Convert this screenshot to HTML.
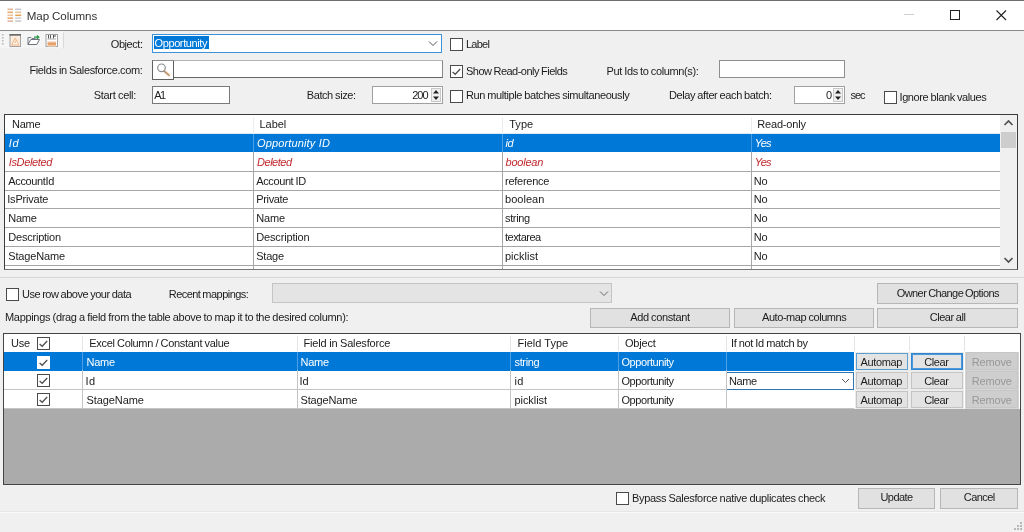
<!DOCTYPE html>
<html>
<head>
<meta charset="utf-8">
<title>Map Columns</title>
<style>
html,body{margin:0;padding:0;}
body{width:1024px;height:532px;overflow:hidden;background:#f0f0f0;font-family:"Liberation Sans",sans-serif;font-size:11px;color:#1c1c1c;position:relative;}
.abs{position:absolute;}
.t{position:absolute;white-space:nowrap;line-height:16px;height:16px;}
.inp{position:absolute;background:#fff;border:1px solid #7a7a7a;box-sizing:border-box;}
.cb{position:absolute;width:13px;height:13px;box-sizing:border-box;border:1px solid #4a4a4a;background:#fff;}
.cb svg{position:absolute;left:0;top:0;}
.btn{position:absolute;box-sizing:border-box;border:1px solid #b6b6b6;background:#e1e1e1;}
.hl{position:absolute;height:1px;background:#a6a6a6;}
.vl{position:absolute;width:1px;background:#a6a6a6;}
#titlebar{left:0;top:0;width:1024px;height:31px;background:#fff;border-top:1px solid #6e6e6e;border-bottom:1px solid #8a8a8a;box-sizing:border-box;}
</style>
</head>
<body>
<div id="titlebar" class="abs"></div>
<svg class="abs" style="left:7px;top:8px" width="15" height="14" viewBox="0 0 15 14">
 <g><rect x="0.500" y="0.500" width="5.500" height="1.600" fill="#e3b89a"/><rect x="0.500" y="3.500" width="5.500" height="1.600" fill="#e9a96c"/><rect x="0.500" y="6.500" width="5.500" height="1.600" fill="#ebc3a2"/><rect x="0.500" y="9.400" width="5.500" height="1.600" fill="#e9a96c"/><rect x="0.500" y="12.300" width="5.500" height="1.600" fill="#dcb5a4"/></g>
 <g><rect x="8.200" y="0.500" width="6" height="1.600" fill="#c9c9d2"/><rect x="8.200" y="3.500" width="6" height="1.600" fill="#e4c3a4"/><rect x="8.200" y="6.500" width="6" height="1.600" fill="#e9a355"/><rect x="8.200" y="9.400" width="6" height="1.600" fill="#d2d2da"/><rect x="8.200" y="12.300" width="6" height="1.600" fill="#c9c9c9"/></g>
</svg>
<svg class="abs" style="left:900px;top:5px" width="120" height="22" viewBox="0 0 120 22">
 <line x1="4" y1="9.500" x2="14" y2="9.500" stroke="#d0d0d0" stroke-width="1"/>
 <rect x="50.500" y="5.500" width="9" height="9" fill="none" stroke="#222" stroke-width="1"/>
 <path d="M96.500 5.500 L106 15 M106 5.500 L96.500 15" stroke="#222" stroke-width="1.100" fill="none"/>
</svg>
<div class="abs" style="left:0;top:31px;width:64px;height:17px;background:#f5f5f5;"></div>
<svg class="abs" style="left:0px;top:31px" width="66" height="19" viewBox="0 0 66 19">
 <g fill="#b4b4b4"><rect x="2" y="3" width="1.500" height="1.500"/><rect x="2" y="6" width="1.500" height="1.500"/><rect x="2" y="9" width="1.500" height="1.500"/><rect x="2" y="12" width="1.500" height="1.500"/></g>
 <g transform="translate(9.500,3)">
  <rect x="0.500" y="0.500" width="10.500" height="12" fill="#fcecde" stroke="#a2a2a2"/>
  <rect x="0" y="0" width="11.500" height="1.700" fill="#6a6a6a"/>
  <path d="M5.750 4 L9.300 11 L2.200 11 Z" fill="#fff8f0" stroke="#efb684" stroke-width="1"/>
  <path d="M5.750 6.500 V9.300" stroke="#efb684" stroke-width="1"/>
 </g>
 <g transform="translate(27,4)">
  <path d="M1 9.500 V2.500 H4 L5 3.500 H8.500" fill="none" stroke="#6a707a" stroke-width="0.900"/>
  <path d="M1 9.500 L3.800 4.500 H12.500 L9.800 9.500 Z" fill="#fff" stroke="#5c626c" stroke-width="0.900"/>
  <path d="M7 2.200 H11.500 M9.800 0.600 L11.800 2.200 L9.800 3.800" fill="none" stroke="#2a9a48" stroke-width="1.300"/>
 </g>
 <g transform="translate(45.500,3)">
  <defs><linearGradient id="fl" x1="0" y1="0" x2="0" y2="1"><stop offset="0" stop-color="#fff"/><stop offset="0.550" stop-color="#e39258"/><stop offset="1" stop-color="#fde0c4"/></linearGradient></defs>
  <rect x="0.500" y="0.500" width="11.500" height="12" fill="#fdfdfd" stroke="#a2a2a2"/>
  <path d="M3 1 V4.500 M5 1 V4.500 M8 1 V4.500 M9.500 1 V3" stroke="#444" stroke-width="0.900"/>
  <path d="M2 5 H10.500" stroke="#999" stroke-width="0.800"/>
  <rect x="2" y="6.500" width="8.500" height="6" fill="url(#fl)"/>
 </g>
 <rect x="63" y="1.500" width="1" height="16" fill="#d9d9d9"/>
</svg>
<div class="inp" style="left:152px;top:34px;width:290px;height:19px;border-color:#3d93da;"></div>
<div class="abs" style="left:154px;top:36px;width:55px;height:13px;background:#0078d7;"></div>
<svg class="abs" style="left:428px;top:40px" width="10" height="7" viewBox="0 0 10 7"><path d="M1 1.500 L5 5.500 L9 1.500" fill="none" stroke="#555" stroke-width="1"/></svg>
<div class="cb" style="left:450px;top:38px;"></div>
<div class="abs" style="left:152px;top:60px;width:22px;height:20px;box-sizing:border-box;border:1px solid #606060;border-top-color:#8c8c8c;background:#fff;"></div>
<svg class="abs" style="left:155px;top:62px" width="16" height="16" viewBox="0 0 16 16"><path d="M9.300 9.200 L14 13.200" stroke="#f8dcc0" stroke-width="3" stroke-linecap="round"/><path d="M9.300 9.200 L14 13.200" stroke="#b08a6a" stroke-width="1.300" stroke-linecap="round"/><circle cx="6.500" cy="5.800" r="3.800" fill="#fff" stroke="#8c8c8c" stroke-width="1.200"/></svg>
<div class="inp" style="left:173px;top:60px;width:270px;height:18px;border-color:#b4b4b4 #888 #666 #606060;"></div>
<div class="cb" style="left:450px;top:65px;"><svg width="11" height="11" viewBox="0 0 11 11"><path d="M1.600 6 L4.200 8.300 L9.200 3" fill="none" stroke="#505050" stroke-width="1.300"/></svg></div>
<div class="inp" style="left:719px;top:60px;width:126px;height:18px;border-color:#8e8e8e;"></div>
<div class="inp" style="left:152px;top:86px;width:78px;height:18px;"></div>
<div class="inp" style="left:372px;top:86px;width:71px;height:18px;border-color:#a0a0a0;"></div>
<div class="abs" style="left:431px;top:88px;width:10px;height:14px;background:#f0f0f0;border:1px solid #c8c8c8;box-sizing:border-box;"></div><svg class="abs" style="left:432px;top:88px" width="8" height="14" viewBox="0 0 8 14"><path d="M1 5.500 L4 2 L7 5.500 Z M1 8.500 L4 12 L7 8.500 Z" fill="#222"/></svg>
<div class="cb" style="left:450px;top:90px;"></div>
<div class="inp" style="left:794px;top:86px;width:51px;height:18px;border-color:#a0a0a0;"></div>
<div class="abs" style="left:833px;top:88px;width:10px;height:14px;background:#f0f0f0;border:1px solid #c8c8c8;box-sizing:border-box;"></div><svg class="abs" style="left:834px;top:88px" width="8" height="14" viewBox="0 0 8 14"><path d="M1 5.500 L4 2 L7 5.500 Z M1 8.500 L4 12 L7 8.500 Z" fill="#222"/></svg>
<div class="cb" style="left:884px;top:91px;"></div>
<div class="abs" style="left:4px;top:114px;width:1014px;height:156px;background:#fff;border:1px solid #3c3c3c;border-bottom-color:#777;box-sizing:border-box;overflow:hidden;">
<div class="abs" style="left:0;top:19px;width:995px;height:18px;background:#0078d7;"></div>
<div class="hl" style="left:0;width:995px;top:56px;"></div>
<div class="hl" style="left:0;width:995px;top:75px;"></div>
<div class="hl" style="left:0;width:995px;top:93px;"></div>
<div class="hl" style="left:0;width:995px;top:112px;"></div>
<div class="hl" style="left:0;width:995px;top:131px;"></div>
<div class="hl" style="left:0;width:995px;top:150px;"></div>
<div class="hl" style="left:0;width:995px;top:168px;"></div>
<div class="hl" style="left:0;width:995px;top:18px;background:#dbeaf7;"></div>
<div class="vl" style="left:248px;top:37px;height:160px;"></div>
<div class="vl" style="left:248px;top:19px;height:18px;background:#4a9fe6;"></div>
<div class="vl" style="left:248px;top:2px;height:15px;background:#ececec;"></div>
<div class="vl" style="left:497px;top:37px;height:160px;"></div>
<div class="vl" style="left:497px;top:19px;height:18px;background:#4a9fe6;"></div>
<div class="vl" style="left:497px;top:2px;height:15px;background:#ececec;"></div>
<div class="vl" style="left:746px;top:37px;height:160px;"></div>
<div class="vl" style="left:746px;top:19px;height:18px;background:#4a9fe6;"></div>
<div class="vl" style="left:746px;top:2px;height:15px;background:#ececec;"></div>
<div class="abs" style="left:995px;top:0;width:17px;height:160px;background:#f0f0f0;"></div>
<div class="abs" style="left:996px;top:17px;width:15px;height:16px;background:#cdcdcd;"></div>
<svg class="abs" style="left:998px;top:4px" width="11" height="8" viewBox="0 0 11 8"><path d="M1.500 6 L5.500 2 L9.500 6" fill="none" stroke="#505050" stroke-width="1.700"/></svg>
<svg class="abs" style="left:998px;top:141px" width="11" height="8" viewBox="0 0 11 8"><path d="M1.500 2 L5.500 6 L9.500 2" fill="none" stroke="#505050" stroke-width="1.700"/></svg>
</div>
<div class="abs" style="left:0;top:277px;width:1024px;height:1px;background:#d8d8d8;"></div>
<div class="cb" style="left:6px;top:288px;"></div>
<div class="abs" style="left:272px;top:283px;width:340px;height:20px;box-sizing:border-box;border:1px solid #c4c4c4;background:#e4e4e4;"></div>
<svg class="abs" style="left:599px;top:290px" width="10" height="7" viewBox="0 0 10 7"><path d="M1 1.500 L5 5.500 L9 1.500" fill="none" stroke="#666" stroke-width="1"/></svg>
<div class="btn" style="left:877px;top:283px;width:141px;height:21px;"></div>
<div class="btn" style="left:590px;top:308px;width:140px;height:20px;"></div>
<div class="btn" style="left:734px;top:308px;width:140px;height:20px;"></div>
<div class="btn" style="left:877px;top:308px;width:141px;height:20px;"></div>
<div class="abs" style="left:3px;top:333px;width:1018px;height:152px;background:#ababab;border:1px solid #444;box-sizing:border-box;overflow:hidden;">
<div class="abs" style="left:0;top:0;width:1016px;height:18px;background:#fff;"></div>
<div class="cb" style="left:33px;top:3px;"><svg width="11" height="11" viewBox="0 0 11 11"><path d="M1.600 6 L4.200 8.300 L9.200 3" fill="none" stroke="#505050" stroke-width="1.300"/></svg></div>
<div class="abs" style="left:0;top:18px;width:1016px;height:19px;background:#fff;"></div>
<div class="abs" style="left:0;top:18px;width:850px;height:19px;background:#0078d7;"></div>
<div class="cb" style="left:33px;top:22px;border-color:#fff;"><svg width="11" height="11" viewBox="0 0 11 11"><path d="M1.600 6 L4.200 8.300 L9.200 3" fill="none" stroke="#505050" stroke-width="1.300"/></svg></div>
<div class="abs" style="left:851px;top:18px;width:109px;height:19px;background:#ececec;"></div>
<div class="btn" style="left:852px;top:19px;width:52px;height:17px;border-color:#5a9fd4;background:#e3e3e3;"></div>
<div class="btn" style="left:907px;top:19px;width:52px;height:17px;border-color:#c4c4c4;background:#e3e3e3;border-color:#2f86d2;box-shadow:inset 0 0 0 1px #4b98da;"></div>
<div class="abs" style="left:961px;top:18px;width:54px;height:19px;background:#d6d6d6;"></div>
<div class="btn" style="left:962px;top:18px;width:52px;height:18px;background:#cecece;border-color:#c6c6c6;"></div>
<div class="abs" style="left:0;top:37px;width:1016px;height:19px;background:#fff;"></div>
<div class="hl" style="left:0;width:850px;top:55px;background:#c4c4c4;"></div>
<div class="cb" style="left:33px;top:40px;"><svg width="11" height="11" viewBox="0 0 11 11"><path d="M1.600 6 L4.200 8.300 L9.200 3" fill="none" stroke="#505050" stroke-width="1.300"/></svg></div>
<div class="abs" style="left:722px;top:38px;width:128px;height:18px;box-sizing:border-box;border:1px solid #2f74b5;background:#fff;"></div>
<svg class="abs" style="left:837px;top:44px" width="9" height="6" viewBox="0 0 9 6"><path d="M1 1 L4.500 4.500 L8 1" fill="none" stroke="#555" stroke-width="1"/></svg>
<div class="abs" style="left:851px;top:37px;width:109px;height:19px;background:#ececec;"></div>
<div class="btn" style="left:852px;top:38px;width:52px;height:17px;border-color:#c4c4c4;background:#e3e3e3;"></div>
<div class="btn" style="left:907px;top:38px;width:52px;height:17px;border-color:#c4c4c4;background:#e3e3e3;"></div>
<div class="abs" style="left:961px;top:37px;width:54px;height:19px;background:#d6d6d6;"></div>
<div class="btn" style="left:962px;top:37px;width:52px;height:18px;background:#cecece;border-color:#c6c6c6;"></div>
<div class="abs" style="left:0;top:56px;width:1016px;height:19px;background:#fff;"></div>
<div class="hl" style="left:0;width:850px;top:74px;background:#c4c4c4;"></div>
<div class="cb" style="left:33px;top:59px;"><svg width="11" height="11" viewBox="0 0 11 11"><path d="M1.600 6 L4.200 8.300 L9.200 3" fill="none" stroke="#505050" stroke-width="1.300"/></svg></div>
<div class="abs" style="left:851px;top:56px;width:109px;height:19px;background:#ececec;"></div>
<div class="btn" style="left:852px;top:57px;width:52px;height:17px;border-color:#c4c4c4;background:#e3e3e3;"></div>
<div class="btn" style="left:907px;top:57px;width:52px;height:17px;border-color:#c4c4c4;background:#e3e3e3;"></div>
<div class="abs" style="left:961px;top:56px;width:54px;height:19px;background:#d6d6d6;"></div>
<div class="btn" style="left:962px;top:56px;width:52px;height:18px;background:#cecece;border-color:#c6c6c6;"></div>
<div class="vl" style="left:78px;top:18px;height:56px;background:#c4c4c4;"></div>
<div class="vl" style="left:78px;top:18px;height:18px;background:#4a9fe6;"></div>
<div class="vl" style="left:78px;top:2px;height:15px;background:#e4e4e4;"></div>
<div class="vl" style="left:293px;top:18px;height:56px;background:#c4c4c4;"></div>
<div class="vl" style="left:293px;top:18px;height:18px;background:#4a9fe6;"></div>
<div class="vl" style="left:293px;top:2px;height:15px;background:#e4e4e4;"></div>
<div class="vl" style="left:506px;top:18px;height:56px;background:#c4c4c4;"></div>
<div class="vl" style="left:506px;top:18px;height:18px;background:#4a9fe6;"></div>
<div class="vl" style="left:506px;top:2px;height:15px;background:#e4e4e4;"></div>
<div class="vl" style="left:614px;top:18px;height:56px;background:#c4c4c4;"></div>
<div class="vl" style="left:614px;top:18px;height:18px;background:#4a9fe6;"></div>
<div class="vl" style="left:614px;top:2px;height:15px;background:#e4e4e4;"></div>
<div class="vl" style="left:722px;top:18px;height:56px;background:#c4c4c4;"></div>
<div class="vl" style="left:722px;top:18px;height:18px;background:#4a9fe6;"></div>
<div class="vl" style="left:722px;top:2px;height:15px;background:#e4e4e4;"></div>
<div class="vl" style="left:850px;top:2px;height:15px;background:#e4e4e4;"></div>
<div class="vl" style="left:905px;top:2px;height:15px;background:#e4e4e4;"></div>
<div class="vl" style="left:960px;top:2px;height:15px;background:#e4e4e4;"></div>
</div>
<div class="cb" style="left:616px;top:492px;"></div>
<div class="btn" style="left:858px;top:488px;width:77px;height:21px;"></div>
<div class="btn" style="left:940px;top:488px;width:78px;height:21px;"></div>
<div class="abs" style="left:0;top:511px;width:1024px;height:1px;background:#e6e6e6;"></div><div class="abs" style="left:0;top:512px;width:1024px;height:1px;background:#fafafa;"></div>
<svg class="abs" style="left:1012px;top:520px" width="12" height="12" viewBox="0 0 12 12"><g fill="#b8b8b8"><rect x="8" y="2" width="2" height="2"/><rect x="5" y="5" width="2" height="2"/><rect x="8" y="5" width="2" height="2"/><rect x="2" y="8" width="2" height="2"/><rect x="5" y="8" width="2" height="2"/><rect x="8" y="8" width="2" height="2"/></g></svg>
<div id="txt" style="position:absolute;left:0;top:0;width:1024px;height:532px;will-change:transform;">
<div class="t" style="left:26.70px;top:7.58px;letter-spacing:-0.084px;word-spacing:-0.084px;font-size:11.6px;color:#333;">Map Columns</div>
<div class="t" style="left:110.75px;top:35.69px;letter-spacing:-0.424px;">Object:</div>
<div class="t" style="left:154.50px;top:34.99px;letter-spacing:-0.386px;color:#fff;">Opportunity</div>
<div class="t" style="left:466.00px;top:35.69px;letter-spacing:-0.743px;">Label</div>
<div class="t" style="left:29.40px;top:62.39px;letter-spacing:-0.362px;word-spacing:-0.362px;">Fields in Salesforce.com:</div>
<div class="t" style="left:466.00px;top:62.59px;letter-spacing:-0.516px;word-spacing:-0.516px;">Show Read-only Fields</div>
<div class="t" style="left:606.50px;top:62.59px;letter-spacing:-0.372px;word-spacing:-0.372px;">Put Ids to column(s):</div>
<div class="t" style="left:93.75px;top:87.49px;letter-spacing:-0.299px;word-spacing:-0.299px;">Start cell:</div>
<div class="t" style="left:154.25px;top:87.49px;letter-spacing:-1.587px;">A1</div>
<div class="t" style="left:306.75px;top:87.49px;letter-spacing:-0.409px;word-spacing:-0.409px;">Batch size:</div>
<div class="t" style="left:412.25px;top:87.49px;letter-spacing:-0.993px;">200</div>
<div class="t" style="left:466.00px;top:87.49px;letter-spacing:-0.400px;word-spacing:-0.400px;">Run multiple batches simultaneously</div>
<div class="t" style="left:669.00px;top:87.49px;letter-spacing:-0.403px;word-spacing:-0.403px;">Delay after each batch:</div>
<div class="t" style="left:826.00px;top:87.49px;">0</div>
<div class="t" style="left:850.50px;top:87.49px;letter-spacing:-1.059px;">sec</div>
<div class="t" style="left:899.50px;top:88.59px;letter-spacing:-0.407px;word-spacing:-0.407px;">Ignore blank values</div>
<div class="t" style="left:12.00px;top:115.79px;letter-spacing:-0.242px;">Name</div>
<div class="t" style="left:259.50px;top:115.79px;letter-spacing:-0.055px;">Label</div>
<div class="t" style="left:509.25px;top:115.79px;letter-spacing:0.007px;">Type</div>
<div class="t" style="left:757.25px;top:115.79px;letter-spacing:-0.174px;">Read-only</div>
<div class="t" style="left:8.75px;top:135.24px;letter-spacing:0.694px;font-style:italic;color:#fff;">Id</div>
<div class="t" style="left:257.00px;top:135.24px;letter-spacing:0.145px;word-spacing:0.145px;font-style:italic;color:#fff;">Opportunity ID</div>
<div class="t" style="left:505.50px;top:135.24px;letter-spacing:-0.444px;font-style:italic;color:#fff;">id</div>
<div class="t" style="left:754.70px;top:135.24px;letter-spacing:-0.774px;font-style:italic;color:#fff;">Yes</div>
<div class="t" style="left:8.75px;top:153.99px;letter-spacing:-0.357px;font-style:italic;color:#c0282d;">IsDeleted</div>
<div class="t" style="left:257.00px;top:153.99px;letter-spacing:-0.466px;font-style:italic;color:#c0282d;">Deleted</div>
<div class="t" style="left:505.50px;top:153.99px;letter-spacing:-0.214px;font-style:italic;color:#c0282d;">boolean</div>
<div class="t" style="left:754.70px;top:153.99px;letter-spacing:-0.774px;font-style:italic;color:#c0282d;">Yes</div>
<div class="t" style="left:8.25px;top:172.74px;letter-spacing:-0.350px;">AccountId</div>
<div class="t" style="left:256.25px;top:172.74px;letter-spacing:-0.386px;word-spacing:-0.386px;">Account ID</div>
<div class="t" style="left:505.00px;top:172.74px;letter-spacing:-0.263px;">reference</div>
<div class="t" style="left:753.80px;top:172.74px;letter-spacing:-0.144px;">No</div>
<div class="t" style="left:7.25px;top:191.49px;letter-spacing:-0.209px;">IsPrivate</div>
<div class="t" style="left:256.25px;top:191.49px;letter-spacing:-0.353px;">Private</div>
<div class="t" style="left:505.00px;top:191.49px;letter-spacing:0.036px;">boolean</div>
<div class="t" style="left:753.80px;top:191.49px;letter-spacing:-0.144px;">No</div>
<div class="t" style="left:8.25px;top:210.24px;letter-spacing:-0.242px;">Name</div>
<div class="t" style="left:256.25px;top:210.24px;letter-spacing:-0.158px;">Name</div>
<div class="t" style="left:505.00px;top:210.24px;letter-spacing:-0.356px;">string</div>
<div class="t" style="left:753.80px;top:210.24px;letter-spacing:-0.144px;">No</div>
<div class="t" style="left:8.25px;top:228.99px;letter-spacing:-0.215px;">Description</div>
<div class="t" style="left:256.25px;top:228.99px;letter-spacing:-0.165px;">Description</div>
<div class="t" style="left:505.00px;top:228.99px;letter-spacing:-0.518px;">textarea</div>
<div class="t" style="left:753.80px;top:228.99px;letter-spacing:-0.144px;">No</div>
<div class="t" style="left:8.25px;top:247.74px;letter-spacing:-0.153px;">StageName</div>
<div class="t" style="left:256.25px;top:247.74px;letter-spacing:-0.245px;">Stage</div>
<div class="t" style="left:505.00px;top:247.74px;letter-spacing:-0.007px;">picklist</div>
<div class="t" style="left:753.80px;top:247.74px;letter-spacing:-0.144px;">No</div>
<div class="t" style="left:22.00px;top:285.69px;letter-spacing:-0.487px;word-spacing:-0.487px;">Use row above your data</div>
<div class="t" style="left:168.75px;top:285.69px;letter-spacing:-0.538px;word-spacing:-0.538px;">Recent mappings:</div>
<div class="t" style="left:896.75px;top:285.19px;letter-spacing:-0.581px;word-spacing:-0.581px;">Owner Change Options</div>
<div class="t" style="left:5.00px;top:309.44px;letter-spacing:-0.320px;word-spacing:-0.320px;">Mappings (drag a field from the table above to map it to the desired column):</div>
<div class="t" style="left:630.25px;top:308.94px;letter-spacing:-0.367px;word-spacing:-0.367px;">Add constant</div>
<div class="t" style="left:762.00px;top:308.94px;letter-spacing:-0.435px;word-spacing:-0.435px;">Auto-map columns</div>
<div class="t" style="left:929.75px;top:308.94px;letter-spacing:-0.462px;word-spacing:-0.462px;">Clear all</div>
<div class="t" style="left:11.00px;top:335.19px;letter-spacing:-0.222px;">Use</div>
<div class="t" style="left:89.25px;top:335.19px;letter-spacing:-0.314px;word-spacing:-0.314px;">Excel Column / Constant value</div>
<div class="t" style="left:303.50px;top:335.19px;letter-spacing:-0.181px;word-spacing:-0.181px;">Field in Salesforce</div>
<div class="t" style="left:517.50px;top:335.19px;letter-spacing:0.012px;word-spacing:0.012px;">Field Type</div>
<div class="t" style="left:625.00px;top:335.19px;letter-spacing:-0.197px;">Object</div>
<div class="t" style="left:731.00px;top:335.19px;letter-spacing:-0.351px;word-spacing:-0.351px;">If not Id match by</div>
<div class="t" style="left:86.50px;top:354.49px;letter-spacing:-0.242px;color:#fff;">Name</div>
<div class="t" style="left:300.50px;top:354.49px;letter-spacing:-0.242px;color:#fff;">Name</div>
<div class="t" style="left:514.50px;top:354.49px;letter-spacing:-0.356px;color:#fff;">string</div>
<div class="t" style="left:621.50px;top:354.49px;letter-spacing:-0.436px;color:#fff;">Opportunity</div>
<div class="t" style="left:860.50px;top:354.29px;letter-spacing:-0.360px;">Automap</div>
<div class="t" style="left:924.25px;top:354.29px;letter-spacing:-0.406px;">Clear</div>
<div class="t" style="left:971.75px;top:354.29px;letter-spacing:-0.168px;color:#989898;">Remove</div>
<div class="t" style="left:85.50px;top:373.24px;letter-spacing:0.444px;">Id</div>
<div class="t" style="left:299.50px;top:373.24px;letter-spacing:-0.056px;">Id</div>
<div class="t" style="left:514.50px;top:373.24px;letter-spacing:0.306px;">id</div>
<div class="t" style="left:621.50px;top:373.24px;letter-spacing:-0.436px;">Opportunity</div>
<div class="t" style="left:860.50px;top:373.04px;letter-spacing:-0.360px;">Automap</div>
<div class="t" style="left:924.25px;top:373.04px;letter-spacing:-0.406px;">Clear</div>
<div class="t" style="left:971.75px;top:373.04px;letter-spacing:-0.168px;color:#989898;">Remove</div>
<div class="t" style="left:86.50px;top:391.99px;letter-spacing:-0.090px;">StageName</div>
<div class="t" style="left:300.50px;top:391.99px;letter-spacing:-0.153px;">StageName</div>
<div class="t" style="left:514.50px;top:391.99px;letter-spacing:-0.064px;">picklist</div>
<div class="t" style="left:621.50px;top:391.99px;letter-spacing:-0.436px;">Opportunity</div>
<div class="t" style="left:860.50px;top:391.79px;letter-spacing:-0.360px;">Automap</div>
<div class="t" style="left:924.25px;top:391.79px;letter-spacing:-0.406px;">Clear</div>
<div class="t" style="left:971.75px;top:391.79px;letter-spacing:-0.168px;color:#989898;">Remove</div>
<div class="t" style="left:729.00px;top:373.19px;letter-spacing:-0.408px;">Name</div>
<div class="t" style="left:632.00px;top:489.69px;letter-spacing:-0.327px;word-spacing:-0.327px;">Bypass Salesforce native duplicates check</div>
<div class="t" style="left:880.50px;top:489.44px;letter-spacing:-0.571px;">Update</div>
<div class="t" style="left:963.75px;top:489.44px;letter-spacing:-0.559px;">Cancel</div>
</div>
</body>
</html>
